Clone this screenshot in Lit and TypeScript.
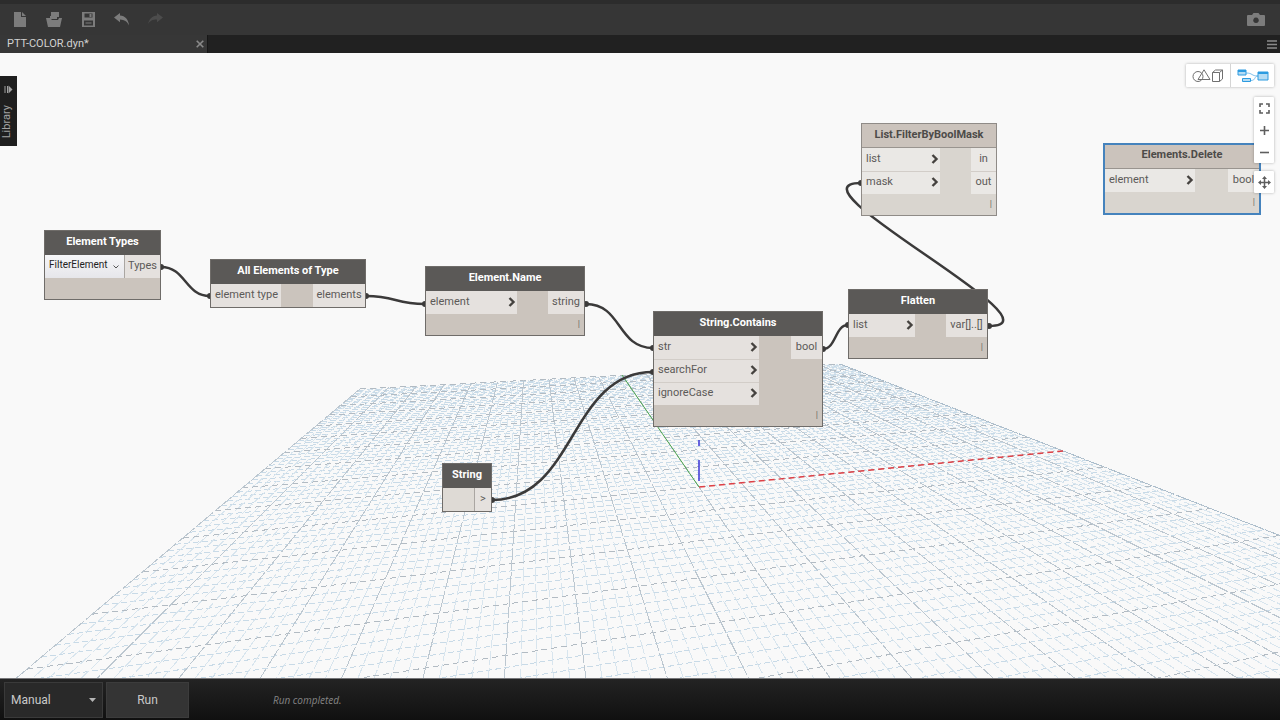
import { LitElement, html, svg, css, nothing } from "lit";
import { customElement, property } from "lit/decorators.js";
import { classMap } from "lit/directives/class-map.js";
import { styleMap } from "lit/directives/style-map.js";

interface NodeData {
  title: string;
  x: number;
  y: number;
  width: number;
  inputs: string[];
  inputWidth: number;
  outputs: string[];
  outputWidth: number;
  lacing?: boolean;
  chevrons?: boolean;
  frozen?: boolean;
  selected?: boolean;
  kind?: "choice" | "text";
}

const NODES: NodeData[] = [
  { title: "Element Types", x: 44, y: 177, width: 117, inputs: [], inputWidth: 80, outputs: ["Types"], outputWidth: 35, kind: "choice" },
  { title: "All Elements of Type", x: 210, y: 206, width: 156, inputs: ["element type"], inputWidth: 70, outputs: ["elements"], outputWidth: 52 },
  { title: "Element.Name", x: 425, y: 213, width: 160, inputs: ["element"], inputWidth: 91, outputs: ["string"], outputWidth: 36, lacing: true, chevrons: true },
  { title: "String.Contains", x: 653, y: 258, width: 170, inputs: ["str", "searchFor", "ignoreCase"], inputWidth: 105, outputs: ["bool"], outputWidth: 31, lacing: true, chevrons: true },
  { title: "List.FilterByBoolMask", x: 861, y: 70, width: 136, inputs: ["list", "mask"], inputWidth: 78, outputs: ["in", "out"], outputWidth: 25, lacing: true, chevrons: true, frozen: true },
  { title: "Elements.Delete", x: 1103, y: 90, width: 158, inputs: ["element"], inputWidth: 90, outputs: ["bool"], outputWidth: 31, lacing: true, chevrons: true, frozen: true, selected: true },
  { title: "Flatten", x: 848, y: 236, width: 140, inputs: ["list"], inputWidth: 66, outputs: ["var[]..[]"], outputWidth: 41, lacing: true, chevrons: true },
  { title: "String", x: 442, y: 410, width: 50, inputs: [], inputWidth: 32, outputs: [">"], outputWidth: 16, kind: "text" },
];

/* from x, from y, to x, to y, reach of the bezier handles */
const WIRES: number[][] = [
  [161, 214, 210, 243, 25],
  [366, 243, 425, 251, 30],
  [586, 251, 653, 295, 36],
  [492, 447, 653, 319, 84],
  [823, 296, 848, 272, 13],
  [989, 273, 861, 130, 80],
];

/* Ground plane projection: plane runs from -1 to 1 on both axes. */
function project(u: number, v: number): string {
  const w = 1 + 0.173 * u + 0.85 * v;
  const x = (699 + 547.9 * u + 452.4 * v) / w;
  const y = (487 + 42 * u + 207.4 * v) / w - 53;
  return `${x.toFixed(1)},${y.toFixed(1)}`;
}

const NEAR = 0.3;
const HALF = 50;

function gridPath(axis: "u" | "v", major: boolean): string {
  let d = "";
  for (let i = -HALF; i <= HALF; i++) {
    if ((i % 5 === 0) !== major) continue;
    const k = i / HALF;
    if (axis === "u") {
      const near = Math.max(-1, (NEAR - 1 - 0.173 * k) / 0.85);
      d += `M${project(k, 1)}L${project(k, near)}`;
    } else {
      const start = Math.max(-1, (NEAR - 1 - 0.85 * k) / 0.173);
      if (start >= 1) continue;
      d += `M${project(start, k)}L${project(1, k)}`;
    }
  }
  return d;
}

@customElement("ground-grid")
class GroundGrid extends LitElement {
  static styles = css`
    :host { display: block; }
    .plane { display: block; width: 100%; height: 100%; }
    .plane path { fill: none; stroke-width: 1; shape-rendering: crispEdges; }
    .minor-v { stroke: #c8dae7; stroke-dasharray: 6 3; }
    .minor-u { stroke: #d8e5ee; stroke-dasharray: 14 3; }
    .major-v { stroke: #b2bbc3; stroke-dasharray: 6 4; }
    .major-u { stroke: #bcc7d0; stroke-dasharray: 22 2; }
    .plane .edge { stroke: #a9bccb; stroke-dasharray: 2 1; }
    .plane .axis-x { stroke: #de4046; stroke-dasharray: 6 4; stroke-width: 1.5; shape-rendering: auto; }
    .plane .axis-y { stroke: #4fa64f; shape-rendering: auto; }
    .plane .axis-z { stroke: #3b34d6; stroke-width: 1.5; shape-rendering: auto; }
  `;

  render() {
    return html`<svg class="plane" aria-hidden="true">
      <path class="minor-v" d=${gridPath("v", false)} />
      <path class="minor-u" d=${gridPath("u", false)} />
      <path class="major-v" d=${gridPath("v", true)} />
      <path class="major-u" d=${gridPath("u", true)} />
      <path class="edge" d=${`M${project(1, 1)}L${project(1, -0.7)}`} />
      <path class="axis-x" d="M699,434L1063,398" />
      <path class="axis-y" d="M699,434L622,322" />
      <path class="axis-z" d="M699,428V407M699,393V387" />
    </svg>`;
  }
}

@customElement("graph-node")
class GraphNode extends LitElement {
  @property({ attribute: false }) node!: NodeData;

  static styles = css`
    :host { display: block; font-family: Roboto, "Open Sans", sans-serif; }
    .node { box-sizing: border-box; border: 1px solid #6f6c69; background: #cbc4bd; }
    .title {
      margin: 0; height: 24px; line-height: 22px; text-align: center; white-space: nowrap;
      font-size: 11px; font-weight: 700; color: #fff; background: #5b5957;
    }
    .ports { display: flex; justify-content: space-between; }
    .port {
      display: flex; align-items: flex-start; justify-content: space-between; box-sizing: border-box;
      height: 23px; padding: 0 4px; font-size: 11px; line-height: 22px; white-space: nowrap;
      color: #5c5a58; background: #e5e1de;
    }
    .in { padding-right: 1px; }
    .port + .port { border-top: 1px solid #d2cdc8; }
    .port + .port .chevron { margin-top: 5px; }
    .port + .port { line-height: 20px; }
    .out { justify-content: center; }
    .chevron { width: 8px; height: 10px; margin-top: 6px; fill: none; stroke: #45423f; stroke-width: 2.4; }
    .lacing { height: 21px; padding-right: 4px; text-align: right; font-size: 9px; line-height: 20px; color: #6a6866; }
    .frozen { background: #d9d5cf; border-color: #8f8b87; }
    .frozen .title { background: #cbc3bc; color: #4d4b49; border-bottom: 1px solid #99948f; box-sizing: border-box; }
    .frozen .port { background: #eae8e5; }
    .selected { border: 2px solid #4583bd; }
    .selected .title { line-height: 20px; }
    .pick { display: grid; flex: none; border-right: 1px solid #aaa6a2; box-sizing: border-box; }
    .choice, .pick-arrow { grid-area: 1 / 1; }
    .choice {
      appearance: none; border: 0; margin: 0; padding: 0 0 5px 4px; width: 100%; height: 23px; border-radius: 0;
      font: 10px Roboto, "Open Sans", sans-serif; color: #222; background: linear-gradient(#f6f6f8, #e6e6ea);
    }
    .pick-arrow { width: 6px; height: 4px; align-self: center; justify-self: end; margin-right: 5px; fill: none; stroke: #555; pointer-events: none; }
    .text { flex: none; box-sizing: border-box; border: 0; border-right: 1px solid #aaa6a2; border-radius: 0; margin: 0; padding: 0 4px; height: 23px; background: #dedad5; }
    .body-space { height: 21px; }
  `;

  private editor(n: NodeData) {
    const size = styleMap({ width: `${n.inputWidth}px` });
    if (n.kind === "choice") {
      return html`<div class="pick" style=${size}>
        <select class="choice" aria-label="Element type"><option>FilterElement</option></select>
        <svg class="pick-arrow" viewBox="0 0 6 4"><path d="M.5.5 3 3 5.5.5" /></svg>
      </div>`;
    }
    return html`<input class="text" type="text" aria-label="String value" style=${size} />`;
  }

  render() {
    const n = this.node;
    return html`<section class=${classMap({ node: true, frozen: !!n.frozen, selected: !!n.selected })}>
      <h2 class="title">${n.title}</h2>
      <div class="ports">
        ${n.kind
          ? this.editor(n)
          : html`<div style=${styleMap({ width: `${n.inputWidth}px` })}>
              ${n.inputs.map((p) => html`<div class="port in"><span>${p}</span>${n.chevrons
                ? html`<svg class="chevron" viewBox="0 0 8 10"><path d="M1.5 1 5.5 5 1.5 9" /></svg>`
                : nothing}</div>`)}
            </div>`}
        <div style=${styleMap({ width: `${n.outputWidth}px` })}>
          ${n.outputs.map((p) => html`<div class="port out"><span>${p}</span></div>`)}
        </div>
      </div>
      ${n.lacing ? html`<div class="lacing">|</div>` : nothing}
      ${n.kind === "choice" ? html`<div class="body-space"></div>` : nothing}
    </section>`;
  }
}

@customElement("app-root")
class AppRoot extends LitElement {
  static styles = css`
    :host {
      display: flex; flex-direction: column; height: 100vh; overflow: hidden;
      font-family: Roboto, "Open Sans", sans-serif; background: #f9f9f9;
    }
    button { font: inherit; border: 0; margin: 0; padding: 0; background: none; color: inherit; display: grid; place-items: center; }
    svg { display: block; }
    .toolbar {
      flex: none; display: flex; align-items: center; gap: 14px; height: 31px; padding: 0 14px 0 10px;
      border-top: 4px solid #2c2c2c; background: #363636; color: #7c7c7c;
    }
    .tool { width: 20px; height: 20px; }
    .dim { color: #4c4c4c; }
    .camera { margin-left: auto; }
    .tabs { flex: none; display: flex; justify-content: space-between; align-items: center; height: 18px; background: #212121; color: #8a8a8a; }
    .tab { display: flex; align-items: center; justify-content: space-between; box-sizing: border-box; width: 208px; height: 18px; padding: 0 3px 0 7px; background: #373737; border-right: 1px solid #171717; }
    .tab-name { font-size: 11px; line-height: 16px; color: #d2d2d2; }
    .tabs-menu { margin-right: 3px; }
    .workspace { position: relative; flex: 1; min-height: 0; overflow: hidden; border-bottom: 1px solid #77777a; }
    .ground, .wires { position: absolute; inset: 0; width: 100%; height: 100%; }
    .wire { fill: none; stroke: #3b3a3a; stroke-width: 2.5; }
    .plug { fill: #3b3a3a; }
    .node { position: absolute; }
    .library {
      position: absolute; left: 0; top: 23px; width: 17px; height: 70px; padding: 8px 0; box-sizing: border-box;
      display: flex; flex-direction: column; align-items: center; justify-content: space-between; background: #1f1f1f; color: #a2a2a2;
    }
    .library-name { writing-mode: vertical-rl; transform: rotate(180deg); font-size: 11px; line-height: 12px; margin-right: 4px; }
    .controls { position: absolute; top: 11px; right: 6px; display: flex; flex-direction: column; align-items: flex-end; color: #5e5e5e; }
    .card { background: #fff; box-shadow: 0 0 3px rgba(0, 0, 0, 0.3); border-radius: 1px; }
    .views { display: flex; margin-bottom: 10px; }
    .view { width: 44px; height: 23px; }
    .view + .view { border-left: 1px solid #d5d5d5; }
    .zoom { display: flex; flex-direction: column; margin-bottom: 8px; }
    .small { width: 20px; height: 22px; }
    .footer {
      flex: none; display: flex; align-items: center; gap: 3px; height: 41px; padding-left: 4px; box-sizing: border-box;
      background: linear-gradient(#232323, #101010); color: #c9c9c9; font-size: 12px;
    }
    .mode { display: grid; width: 99px; }
    .mode-select, .mode-arrow { grid-area: 1 / 1; }
    .mode-select {
      appearance: none; margin: 0; width: 100%; height: 36px; padding: 0 0 0 6px; border: 1px solid #3a3a3a; border-radius: 0;
      background: #292929; color: #c9c9c9; font: 12px Roboto, "Open Sans", sans-serif;
    }
    .mode-arrow { align-self: center; justify-self: end; margin-right: 7px; pointer-events: none; }
    .run { width: 83px; height: 36px; background: #343434; border: 1px solid #3c3c3c; }
    .status { margin: 0 0 0 81px; font-size: 10px; font-style: italic; font-family: "Open Sans", "Noto Sans", sans-serif; color: #858585; }
  `;

  private wire([x1, y1, x2, y2, k]: number[]) {
    return svg`<path class="wire" d=${`M${x1},${y1}C${x1 + k},${y1} ${x2 - k},${y2} ${x2},${y2}`} />
      <circle class="plug" cx=${x1} cy=${y1} r="3" /><circle class="plug" cx=${x2} cy=${y2} r="3" />`;
  }

  render() {
    return html`
      <header class="toolbar">
        <button class="tool" aria-label="New"><svg width="12" height="15" viewBox="0 0 12 15" fill="currentColor"><path d="M0 0h7v5h5v10H0z" /><path d="M8 0l4 4H8z" /></svg></button>
        <button class="tool" aria-label="Open"><svg width="16" height="15" viewBox="0 0 16 15" fill="currentColor"><path d="M5 0h8v5h-2v2H4V4h1z" /><path d="M0 6h4l2 2h6l1-2h3l-2 9H2z" /></svg></button>
        <button class="tool" aria-label="Save"><svg width="13" height="15" viewBox="0 0 13 15"><path fill="currentColor" fill-rule="evenodd" d="M0 0h13v15H0zM2.500 1.500v4h8v-4zM2 8.500v5h9v-5z" /><path fill="currentColor" d="M7.500 2h2v3h-2zM3.500 10.500h6v1h-6z" /></svg></button>
        <button class="tool" aria-label="Undo"><svg width="16" height="14" viewBox="0 0 16 14"><path fill="currentColor" d="M0 4.500 6 0v2.600c5 .2 8.500 4 9 9.900-2-4-4.500-5.700-9-5.900v2.600z" /></svg></button>
        <button class="tool dim" aria-label="Redo"><svg width="16" height="14" viewBox="0 0 16 14"><path fill="currentColor" d="M15 4.500 9 0v2.600C4 2.800 1.500 6 0 11c2-3.200 4.500-4.300 9-4.400v2.600z" /></svg></button>
        <button class="tool camera" aria-label="Export image"><svg width="18" height="14" viewBox="0 0 18 14"><path fill="currentColor" fill-rule="evenodd" d="M1 2h4l1.500-2h5L13 2h4q1 0 1 1v9q0 1-1 1H1q-1 0-1-1V3q0-1 1-1zM9 4.500a2.800 2.800 0 1 0 .01 0z" /></svg></button>
      </header>
      <nav class="tabs">
        <div class="tab"><span class="tab-name">PTT-COLOR.dyn*</span>
          <button aria-label="Close tab"><svg width="8" height="8" viewBox="0 0 8 8"><path d="M.7.7l6.600 6.600M7.300.7.7 7.300" stroke="currentColor" stroke-width="1.600" /></svg></button></div>
        <button class="tabs-menu" aria-label="Tabs menu"><svg width="10" height="9" viewBox="0 0 10 9"><path d="M0 1h10M0 4.500h10M0 8h10" stroke="currentColor" stroke-width="1.500" /></svg></button>
      </nav>
      <main class="workspace">
        <ground-grid class="ground"></ground-grid>
        <svg class="wires" aria-hidden="true">${WIRES.map((w) => this.wire(w))}</svg>
        ${NODES.map((n) => html`<graph-node class="node" .node=${n}
          style=${styleMap({ left: `${n.x}px`, top: `${n.y}px`, width: `${n.width}px` })}></graph-node>`)}
        <button class="library">
          <svg width="9" height="11" viewBox="0 0 9 11"><path d="M1 2v7M3.500 2v7" stroke="currentColor" /><path d="M4.500 1.500 8.500 5.500l-4 4z" fill="currentColor" /></svg>
          <span class="library-name">Library</span>
        </button>
        <div class="controls">
          <div class="views card">
            <button class="view" aria-label="3D view"><svg width="32" height="14" viewBox="0 0 32 14" fill="none" stroke="#707070"><circle cx="6" cy="7.500" r="5" /><path d="M6 10.500 12 .8l6 9.700zM20.500 3.500h7v9h-7zM20.500 3.500l3-2.500h7v9l-3 2.500M27.500 3.500l3-2.500" /></svg></button>
            <button class="view" aria-label="Graph view"><svg width="32" height="14" viewBox="0 0 32 14" fill="#b5dcf4" stroke="#2c9be0"><path fill="none" stroke="#7fc1ec" d="M9 4c7 0 5 3 12 3M14 11.500c5 0 3-4.500 7-4.500" /><path d="M1 1h8v5H1zM5.500 9.500h8v3h-8zM21 3h10v8H21z" /><path stroke-width="2" d="M1 2h8M21 4h10" /></svg></button>
          </div>
          <div class="zoom card">
            <button class="small" aria-label="Zoom to fit"><svg width="11" height="11" viewBox="0 0 11 11" fill="none" stroke="currentColor" stroke-width="1.600"><path d="M1 4V1h3M7 1h3v3M10 7v3H7M4 10H1V7" /></svg></button>
            <button class="small" aria-label="Zoom in"><svg width="9" height="9" viewBox="0 0 9 9" stroke="currentColor" stroke-width="1.600"><path d="M0 4.500h9M4.500 0v9" /></svg></button>
            <button class="small" aria-label="Zoom out"><svg width="9" height="9" viewBox="0 0 9 9" stroke="currentColor" stroke-width="1.600"><path d="M0 4.500h9" /></svg></button>
          </div>
          <button class="small card" aria-label="Pan"><svg width="13" height="13" viewBox="0 0 13 13"><path d="M2 6.500h9M6.500 2v9" stroke="currentColor" stroke-width="1.500" /><path fill="currentColor" d="M6.500 0 9 3H4zM6.500 13 9 10H4zM0 6.500 3 4v5zM13 6.500 10 4v5z" /></svg></button>
        </div>
      </main>
      <footer class="footer">
        <div class="mode">
          <select class="mode-select" aria-label="Run mode"><option>Manual</option></select>
          <svg class="mode-arrow" width="7" height="4" viewBox="0 0 7 4"><path d="M0 0h7L3.500 4z" fill="#b5b5b5" /></svg>
        </div>
        <button class="run">Run</button>
        <p class="status">Run completed.</p>
      </footer>
    `;
  }
}
